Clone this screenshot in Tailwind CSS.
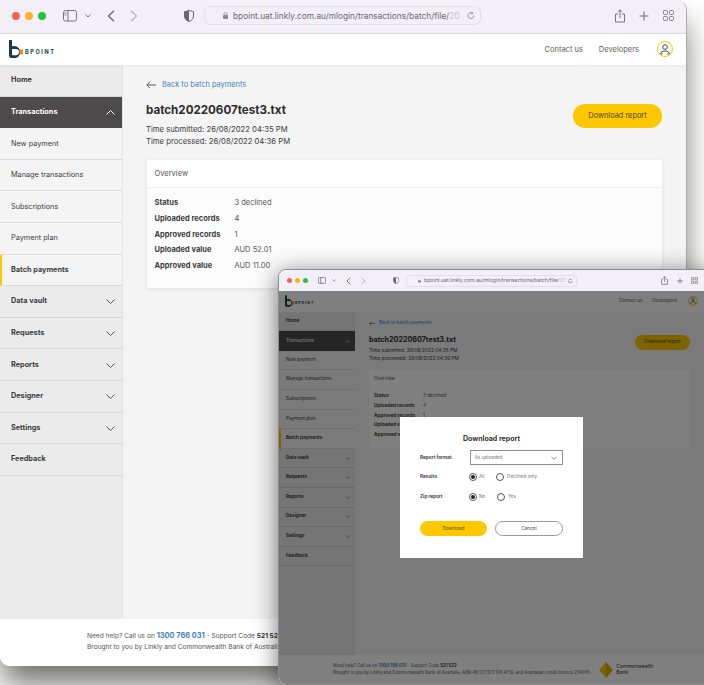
<!DOCTYPE html>
<html lang="en">
<head>
<meta charset="UTF-8">
<title>BPOINT batch payments</title>
<script src="https://cdn.jsdelivr.net/npm/@tailwindcss/browser@4"></script>
</head>
<body class="bg-white">
<div class="relative w-[704px] h-[685px] overflow-hidden font-['Inter',sans-serif] text-[#3c3c3c]">

  <!-- back window -->
  <div class="absolute left-0 top-0 w-[687px] h-[666px] rounded-b-[10px] rounded-tr-[10px] overflow-hidden flex flex-col bg-white shadow-[0_20px_30px_-2px_rgba(40,40,30,0.65)] border-r border-[#a9a9a9]">
    <!-- toolbar -->
    <div class="h-[33.500px] shrink-0 bg-[#f2eff6] border-b border-[#dcdae0] flex items-center pl-[12px] pb-[1px]">
      <div class="flex gap-[5px]">
        <span class="w-[8px] h-[8px] rounded-full bg-[#f25f57]"></span>
        <span class="w-[8px] h-[8px] rounded-full bg-[#fbb32e]"></span>
        <span class="w-[8px] h-[8px] rounded-full bg-[#28c23f]"></span>
      </div>
      <svg class="ml-[17px]" width="14" height="12" viewBox="0 0 14 12" fill="none" stroke="#77757c" stroke-width="1"><rect x="0.5" y="0.5" width="13" height="10.500" rx="2"/><path d="M5 .5v10.500"/><path d="M1.500 3h2M1.500 5h2"/></svg>
      <svg class="ml-[8px]" width="6" height="4" viewBox="0 0 6 4" fill="none" stroke="#77757c"><path d="M.5.500l2.500 2.500L5.500.500"/></svg>
      <svg class="ml-[16px]" width="8" height="12" viewBox="0 0 8 12" fill="none" stroke="#6b696f" stroke-width="1.300"><path d="M7 .7L1.500 6 7 11.300"/></svg>
      <svg class="ml-[15px]" width="8" height="12" viewBox="0 0 8 12" fill="none" stroke="#b5b3b9" stroke-width="1.300"><path d="M1 .7L6.500 6 1 11.300"/></svg>
      <svg class="ml-[46px]" width="10" height="12" viewBox="0 0 10 12"><path d="M5 .5L9.500 1.800V6c0 2.800-2 4.600-4.500 5.500C2.500 10.600.5 8.800.5 6V1.800z" fill="none" stroke="#68666c"/><path d="M5 .5L.5 1.800V6c0 2.800 2 4.600 4.500 5.500z" fill="#68666c"/></svg>
      <div class="ml-[10px] w-[277px] h-[19px] rounded-[6px] border border-[#e2e0e7] flex items-center pl-[18px] gap-[5px] text-[8.300px] text-[#6c6a70] relative">
        <svg width="5" height="7" viewBox="0 0 5 7"><rect y="3" width="5" height="4" rx="1" fill="#8a888e"/><path d="M1 3V2a1.500 1.500 0 013 0v1" fill="none" stroke="#8a888e" stroke-width=".8"/></svg>
        <span class="whitespace-nowrap">bpoint.uat.linkly.com.au/mlogin/transactions/batch/file/<span class="text-[#c4c2c8]">20</span></span>
        <svg class="absolute right-[5px] top-[4px]" width="8" height="9" viewBox="0 0 8 9" fill="none" stroke="#85838a" stroke-width=".9"><path d="M6.800 4.500a2.900 2.900 0 11-1.100-2.200M4.500 .8l1.300 1.500L4.200 3.400"/></svg>
      </div>
      <svg class="ml-[134px]" width="10" height="14" viewBox="0 0 10 14" fill="none" stroke="#77757c" stroke-width="1"><path d="M3 5H.5v8h9V5H7M5 9V1M3 2.800L5 .8l2 2"/></svg>
      <svg class="ml-[14px]" width="10" height="10" viewBox="0 0 10 10" fill="none" stroke="#77757c" stroke-width="1.100"><path d="M5 .5v9M.5 5h9"/></svg>
      <svg class="ml-[14px]" width="11" height="11" viewBox="0 0 11 11" fill="none" stroke="#77757c" stroke-width=".9"><rect x=".5" y=".5" width="4" height="4" rx="1"/><rect x="6.500" y=".5" width="4" height="4" rx="1"/><rect x=".5" y="6.500" width="4" height="4" rx="1"/><rect x="6.500" y="6.500" width="4" height="4" rx="1"/></svg>
    </div>
    <!-- header -->
    <div class="h-[31.500px] shrink-0 bg-white flex items-center justify-between pl-[9px] pr-[13px] shadow-[0_1px_4px_rgba(0,0,0,0.06)] z-10">
      <div class="flex items-center">
        <svg width="14" height="18" viewBox="0 0 14 18"><path d="M0 0h3v6.300A6 6 0 117 18H2.500A2.500 2.500 0 010 15.500zM3 9v5.500a.7.7 0 00.7.7H7a3.100 3.100 0 000-6.200z" fill="#1c3a4c"/><path d="M10.500 9.500h3.500v4l-1.500 1.500-2-2.500z" fill="#f58a1f"/></svg>
        <span class="ml-[2px] mt-[6px] text-[5.500px] font-bold tracking-[1.600px] leading-none text-[#1c3a4c]">BPOINT</span>
      </div>
      <div class="flex items-center text-[7.500px] text-[#5c5c5c]">
        <span>Contact us</span>
        <span class="ml-[16px]">Developers</span>
        <span class="ml-[18px] w-[16px] h-[16px] rounded-full border border-[#fcc800] overflow-hidden flex items-center justify-center">
          <svg width="12" height="13" viewBox="0 0 12 13" fill="none" stroke="#444" stroke-width="1"><circle cx="6" cy="4" r="2.300"/><path d="M1.500 11c0-4 9-4 9 0M2 11h1.500M8.500 11H10"/></svg>
        </span>
      </div>
    </div>
    <div class="flex-1 flex min-h-0">
      <!-- sidebar -->
      <div class="w-[123px] shrink-0 bg-[#ebebeb] border-r border-[#e3e3e3] text-[7.300px]">
        <div class="h-[31.600px] pt-[1px] border-b border-[#d5d5d5] flex items-center pl-[11px] font-bold">Home</div>
        <div class="h-[31.600px] pt-[1px] bg-[#4c4a4a] text-white flex items-center justify-between pl-[11px] pr-[7px] font-bold">Transactions
          <svg width="9" height="5" viewBox="0 0 9 5" fill="none" stroke="#fff"><path d="M.5 4.500l4-4 4 4"/></svg></div>
        <div class="h-[31.600px] pt-[1px] bg-[#f4f4f4] border-b border-[#dcdcdc] flex items-center pl-[11px]">New payment</div>
        <div class="h-[31.600px] pt-[1px] bg-[#f4f4f4] border-b border-[#dcdcdc] flex items-center pl-[11px]">Manage transactions</div>
        <div class="h-[31.600px] pt-[1px] bg-[#f4f4f4] border-b border-[#dcdcdc] flex items-center pl-[11px]">Subscriptions</div>
        <div class="h-[31.600px] pt-[1px] bg-[#f4f4f4] border-b border-[#dcdcdc] flex items-center pl-[11px]">Payment plan</div>
        <div class="h-[31.600px] pt-[1px] bg-[#f4f4f4] border-b border-[#dcdcdc] border-l-2 border-l-[#fcc800] flex items-center pl-[9px] font-bold">Batch payments</div>
        <div class="h-[31.600px] pt-[1px] border-b border-[#d5d5d5] flex items-center justify-between pl-[11px] pr-[7px] font-bold">Data vault
          <svg width="9" height="5" viewBox="0 0 9 5" fill="none" stroke="#555"><path d="M.5.500l4 4 4-4"/></svg></div>
        <div class="h-[31.600px] pt-[1px] border-b border-[#d5d5d5] flex items-center justify-between pl-[11px] pr-[7px] font-bold">Requests
          <svg width="9" height="5" viewBox="0 0 9 5" fill="none" stroke="#555"><path d="M.5.500l4 4 4-4"/></svg></div>
        <div class="h-[31.600px] pt-[1px] border-b border-[#d5d5d5] flex items-center justify-between pl-[11px] pr-[7px] font-bold">Reports
          <svg width="9" height="5" viewBox="0 0 9 5" fill="none" stroke="#555"><path d="M.5.500l4 4 4-4"/></svg></div>
        <div class="h-[31.600px] pt-[1px] border-b border-[#d5d5d5] flex items-center justify-between pl-[11px] pr-[7px] font-bold">Designer
          <svg width="9" height="5" viewBox="0 0 9 5" fill="none" stroke="#555"><path d="M.5.500l4 4 4-4"/></svg></div>
        <div class="h-[31.600px] pt-[1px] border-b border-[#d5d5d5] flex items-center justify-between pl-[11px] pr-[7px] font-bold">Settings
          <svg width="9" height="5" viewBox="0 0 9 5" fill="none" stroke="#555"><path d="M.5.500l4 4 4-4"/></svg></div>
        <div class="h-[31.600px] pt-[1px] border-b border-[#d5d5d5] flex items-center pl-[11px] font-bold">Feedback</div>
      </div>
      <!-- content -->
      <div class="flex-1 bg-[#f4f4f4] pl-[23px] pr-[24px] pt-[14px]">
        <div class="flex items-center gap-[5px] text-[7.400px] text-[#3f82bd] h-[12px]">
          <svg width="10" height="8" viewBox="0 0 10 8" fill="none" stroke="#444" stroke-width=".9"><path d="M10 4H1M4 .8L.8 4 4 7.200"/></svg>
          <span class="ml-[1px]">Back to batch payments</span>
        </div>
        <div class="flex justify-between mt-[10.500px]">
          <div>
            <div class="text-[11.600px] font-bold leading-[17px] text-[#2c2c2c]">batch20220607test3.txt</div>
            <div class="mt-[5.500px] text-[7.700px] leading-[12px] text-[#3c3c3c]">Time submitted: 26/08/2022 04:35 PM</div>
            <div class="text-[7.700px] leading-[12px] text-[#3c3c3c]">Time processed: 26/08/2022 04:36 PM</div>
          </div>
          <div class="w-[89px] h-[24px] mt-[2.500px] rounded-full bg-[#fdc800] flex items-center justify-center text-[7.400px] text-[#4f4420]">Download report</div>
        </div>
        <div class="mt-[12px] ml-[1px] bg-white shadow-[0_1px_5px_rgba(0,0,0,0.08)]">
          <div class="h-[28px] border-b border-[#f0f0f0] flex items-center pl-[7.500px] text-[7.500px] text-[#555]">Overview</div>
          <div class="grid grid-cols-[80px_1fr] px-[7.500px] pt-[7px] pb-[14px] text-[7.500px] leading-[15.800px] bg-[#fcfcfc]">
            <span class="font-bold">Status</span><span class="text-[#555]">3 declined</span>
            <span class="font-bold">Uploaded records</span><span class="text-[#555]">4</span>
            <span class="font-bold">Approved records</span><span class="text-[#555]">1</span>
            <span class="font-bold">Uploaded value</span><span class="text-[#555]">AUD 52.01</span>
            <span class="font-bold">Approved value</span><span class="text-[#555]">AUD 11.00</span>
          </div>
        </div>
      </div>
    </div>
    <!-- footer -->
    <div class="h-[47px] shrink-0 bg-white pl-[87px] pt-[12px] text-[6.600px] leading-[10.500px] text-[#555] whitespace-nowrap">
      <div>Need help? Call us on <span class="font-bold text-[#3f82bd] text-[7.400px]">1300 766 031</span> - Support Code <span class="font-bold text-[#333]">521 522</span></div>
      <div>Brought to you by Linkly and Commonwealth Bank of Australia</div>
    </div>
  </div>

  <!-- front window -->
  <div class="absolute left-[278px] top-[269px] w-[434px] h-[416px] rounded-[8px] overflow-hidden flex flex-col bg-white border border-[#8c8c8c] shadow-[0_4px_24px_rgba(0,0,0,0.55)]">
    <div class="h-[21px] shrink-0 bg-[#f2eff6] flex items-center pl-[8px]">
      <div class="flex gap-[3px]">
        <span class="w-[5px] h-[5px] rounded-full bg-[#f25f57]"></span>
        <span class="w-[5px] h-[5px] rounded-full bg-[#fbb32e]"></span>
        <span class="w-[5px] h-[5px] rounded-full bg-[#28c23f]"></span>
      </div>
      <svg class="ml-[10px]" width="8" height="7" viewBox="0 0 14 12" fill="none" stroke="#77757c" stroke-width="1.500"><rect x="0.500" y="0.500" width="13" height="10.500" rx="2"/><path d="M5 .5v10.500"/></svg>
      <svg class="ml-[6px]" width="4" height="3" viewBox="0 0 6 4" fill="none" stroke="#77757c"><path d="M.5.500l2.500 2.500L5.500.500"/></svg>
      <svg class="ml-[10px]" width="5" height="8" viewBox="0 0 8 12" fill="none" stroke="#6b696f" stroke-width="1.500"><path d="M7 .7L1.500 6 7 11.300"/></svg>
      <svg class="ml-[10px]" width="5" height="8" viewBox="0 0 8 12" fill="none" stroke="#b5b3b9" stroke-width="1.500"><path d="M1 .7L6.500 6 1 11.300"/></svg>
      <svg class="ml-[27px]" width="6" height="7" viewBox="0 0 10 12"><path d="M5 .5L9.500 1.800V6c0 2.800-2 4.600-4.500 5.500C2.500 10.600.5 8.800.5 6V1.800z" fill="none" stroke="#68666c"/><path d="M5 .5L.5 1.800V6c0 2.800 2 4.600 4.500 5.500z" fill="#68666c"/></svg>
      <div class="ml-[7px] w-[171px] h-[12px] rounded-[3px] border border-[#e2e0e7] flex items-center pl-[11px] gap-[3px] text-[5.200px] text-[#6c6a70] relative">
        <svg width="3" height="5" viewBox="0 0 5 7"><rect y="3" width="5" height="4" rx="1" fill="#8a888e"/></svg>
        <span class="whitespace-nowrap">bpoint.uat.linkly.com.au/mlogin/transactions/batch/file/<span class="text-[#c4c2c8]">20</span></span>
        <svg class="absolute right-[3px] top-[2.500px]" width="5" height="6" viewBox="0 0 8 9" fill="none" stroke="#85838a" stroke-width="1.200"><path d="M6.800 4.500a2.900 2.900 0 11-1.100-2.200"/></svg>
      </div>
      <svg class="ml-[84px]" width="7" height="9" viewBox="0 0 10 14" fill="none" stroke="#77757c" stroke-width="1.200"><path d="M3 5H.5v8h9V5H7M5 9V1M3 2.800L5 .8l2 2"/></svg>
      <svg class="ml-[9px]" width="6" height="6" viewBox="0 0 10 10" fill="none" stroke="#77757c" stroke-width="1.500"><path d="M5 .5v9M.5 5h9"/></svg>
      <svg class="ml-[8px]" width="7" height="7" viewBox="0 0 11 11" fill="none" stroke="#77757c" stroke-width="1.200"><rect x=".5" y=".5" width="4" height="4" rx="1"/><rect x="6.500" y=".5" width="4" height="4" rx="1"/><rect x=".5" y="6.500" width="4" height="4" rx="1"/><rect x="6.500" y="6.500" width="4" height="4" rx="1"/></svg>
    </div>
    <div class="relative flex-1 flex flex-col min-h-0">
      <div class="h-[20.700px] shrink-0 bg-white flex items-center justify-between pl-[6px] pr-[13px]">
        <div class="flex items-center">
          <svg width="9" height="12" viewBox="0 0 14 18"><path d="M0 0h3v6.300A6 6 0 117 18H2.500A2.500 2.500 0 010 15.500zM3 9v5.500a.7.7 0 00.7.7H7a3.100 3.100 0 000-6.200z" fill="#1c3a4c"/><path d="M10.500 9.500h3.500v4l-1.500 1.500-2-2.500z" fill="#f58a1f"/></svg>
          <span class="ml-[1px] mt-[4px] text-[3.500px] font-bold tracking-[1px] leading-none text-[#1c3a4c]">BPOINT</span>
        </div>
        <div class="flex items-center text-[4.600px] text-[#5c5c5c]">
          <span>Contact us</span>
          <span class="ml-[10px]">Developers</span>
          <span class="ml-[11px] w-[10px] h-[10px] rounded-full border border-[#fcc800] flex items-center justify-center">
            <svg width="8" height="8" viewBox="0 0 12 13" fill="none" stroke="#444" stroke-width="1.200"><circle cx="6" cy="4" r="2.300"/><path d="M1.500 11c0-4 9-4 9 0"/></svg>
          </span>
        </div>
      </div>
      <div class="flex-1 flex min-h-0">
        <div class="w-[76px] shrink-0 bg-[#ebebeb] text-[4.600px]">
          <div class="h-[19.600px] border-b border-[#d5d5d5] flex items-center pl-[7px] font-bold">Home</div>
          <div class="h-[19.600px] bg-[#4c4a4a] text-white flex items-center justify-between pl-[7px] pr-[5px]">Transactions
            <svg width="5" height="3" viewBox="0 0 9 5" fill="none" stroke="#fff"><path d="M.5 4.500l4-4 4 4"/></svg></div>
          <div class="h-[19.600px] bg-[#f4f4f4] border-b border-[#dcdcdc] flex items-center pl-[7px]">New payment</div>
          <div class="h-[19.600px] bg-[#f4f4f4] border-b border-[#dcdcdc] flex items-center pl-[7px]">Manage transactions</div>
          <div class="h-[19.600px] bg-[#f4f4f4] border-b border-[#dcdcdc] flex items-center pl-[7px]">Subscriptions</div>
          <div class="h-[19.600px] bg-[#f4f4f4] border-b border-[#dcdcdc] flex items-center pl-[7px]">Payment plan</div>
          <div class="h-[19.600px] bg-[#f4f4f4] border-b border-[#dcdcdc] border-l-2 border-l-[#fcc800] flex items-center pl-[5px] font-bold">Batch payments</div>
          <div class="h-[19.600px] border-b border-[#d5d5d5] flex items-center justify-between pl-[7px] pr-[5px] font-bold">Data vault
            <svg width="5" height="3" viewBox="0 0 9 5" fill="none" stroke="#555"><path d="M.5.500l4 4 4-4"/></svg></div>
          <div class="h-[19.600px] border-b border-[#d5d5d5] flex items-center justify-between pl-[7px] pr-[5px] font-bold">Requests
            <svg width="5" height="3" viewBox="0 0 9 5" fill="none" stroke="#555"><path d="M.5.500l4 4 4-4"/></svg></div>
          <div class="h-[19.600px] border-b border-[#d5d5d5] flex items-center justify-between pl-[7px] pr-[5px] font-bold">Reports
            <svg width="5" height="3" viewBox="0 0 9 5" fill="none" stroke="#555"><path d="M.5.500l4 4 4-4"/></svg></div>
          <div class="h-[19.600px] border-b border-[#d5d5d5] flex items-center justify-between pl-[7px] pr-[5px] font-bold">Designer
            <svg width="5" height="3" viewBox="0 0 9 5" fill="none" stroke="#555"><path d="M.5.500l4 4 4-4"/></svg></div>
          <div class="h-[19.600px] border-b border-[#d5d5d5] flex items-center justify-between pl-[7px] pr-[5px] font-bold">Settings
            <svg width="5" height="3" viewBox="0 0 9 5" fill="none" stroke="#555"><path d="M.5.500l4 4 4-4"/></svg></div>
          <div class="h-[19.600px] border-b border-[#d5d5d5] flex items-center pl-[7px] font-bold">Feedback</div>
        </div>
        <div class="flex-1 bg-[#f4f4f4] pl-[14px] pr-[21px] pt-[8px]">
          <div class="flex items-center gap-[3px] text-[4.600px] text-[#3f82bd] h-[8px]">
            <svg width="6" height="5" viewBox="0 0 10 8" fill="none" stroke="#444"><path d="M10 4H1M4 .8L.8 4 4 7.200"/></svg>
            <span class="ml-[1px]">Back to batch payments</span>
          </div>
          <div class="flex justify-between mt-[6px]">
            <div>
              <div class="text-[7.200px] font-bold leading-[11px] text-[#2c2c2c]">batch20220607test3.txt</div>
              <div class="mt-[2.500px] text-[4.800px] leading-[7.500px]">Time submitted: 26/08/2022 04:35 PM</div>
              <div class="text-[4.800px] leading-[7.500px]">Time processed: 26/08/2022 04:36 PM</div>
            </div>
            <div class="w-[55px] h-[15px] mt-[1.500px] rounded-full bg-[#fdc800] flex items-center justify-center text-[4.600px] text-[#4f4420]">Download report</div>
          </div>
          <div class="mt-[8px] bg-white h-[78px]">
            <div class="h-[16px] flex items-center pl-[5px] text-[4.700px] text-[#555]">Overview</div>
            <div class="grid grid-cols-[49px_1fr] px-[5px] pt-[5px] text-[4.700px] leading-[9.700px]">
              <span class="font-bold">Status</span><span class="text-[#555]">3 declined</span>
              <span class="font-bold">Uploaded records</span><span class="text-[#555]">4</span>
              <span class="font-bold">Approved records</span><span class="text-[#555]">1</span>
              <span class="font-bold">Uploaded value</span><span class="text-[#555]">AUD 52.01</span>
              <span class="font-bold">Approved value</span><span class="text-[#555]">AUD 11.00</span>
            </div>
          </div>
        </div>
      </div>
      <div class="h-[29px] shrink-0 bg-white flex items-center pl-[54px] text-[4.300px] leading-[6.500px] text-[#555] whitespace-nowrap">
        <div>
          <div>Need help? Call us on <span class="font-bold text-[#3f82bd]">1300 766 031</span> - Support Code <span class="font-bold text-[#333]">521 522</span></div>
          <div>Brought to you by Linkly and Commonwealth Bank of Australia, ABN 48 123 123 124 AFSL and Australian credit licence 234945</div>
        </div>
        <svg class="ml-[9px]" width="14" height="16" viewBox="0 0 14 16"><path d="M7 0l7 8-7 8-7-8z" fill="#fdc800"/><path d="M7 0l7 8-7 8z" fill="#222" opacity=".15"/></svg>
        <div class="ml-[3px] text-[5px] leading-[5.500px] text-[#333]">Commonwealth<br>Bank</div>
      </div>
      <!-- dim layer over the page -->
      <div class="absolute inset-0 bg-black/50"></div>
      <!-- dialog -->
      <div class="absolute left-[121px] top-[126px] w-[183px] h-[141px] bg-white px-[20px] pt-[17px] text-[4.700px] text-[#444]">
        <div class="text-center text-[7px] font-bold leading-[10px] text-[#333]">Download report</div>
        <div class="flex items-center mt-[6px] h-[15px]">
          <span class="w-[50px] font-bold">Report format</span>
          <div class="w-[94px] h-[15px] border border-[#8e8e8e] flex items-center justify-between pl-[4px] pr-[5px] text-[#777]">As uploaded
            <svg width="6" height="4" viewBox="0 0 9 5" fill="none" stroke="#555"><path d="M.5.500l4 4 4-4"/></svg>
          </div>
        </div>
        <div class="flex items-center mt-[4.500px] h-[15px]">
          <span class="w-[49px] font-bold">Results</span>
          <span class="w-[8px] h-[8px] rounded-full border border-[#555] flex items-center justify-center"><span class="w-[4px] h-[4px] rounded-full bg-[#222]"></span></span>
          <span class="ml-[2px] w-[17px] text-[#777]">All</span>
          <span class="w-[8px] h-[8px] rounded-full border border-[#555]"></span>
          <span class="ml-[3px] text-[#777]">Declined only</span>
        </div>
        <div class="flex items-center mt-[5px] h-[15px]">
          <span class="w-[49px] font-bold">Zip report</span>
          <span class="w-[8px] h-[8px] rounded-full border border-[#555] flex items-center justify-center"><span class="w-[4px] h-[4px] rounded-full bg-[#222]"></span></span>
          <span class="ml-[2px] w-[18px] text-[#777]">No</span>
          <span class="w-[8px] h-[8px] rounded-full border border-[#555]"></span>
          <span class="ml-[3px] text-[#777]">Yes</span>
        </div>
        <div class="flex justify-between mt-[16.500px]">
          <div class="w-[67px] h-[15px] rounded-full bg-[#fdc800] flex items-center justify-center text-[#5a4d1c]">Download</div>
          <div class="w-[68px] h-[15px] rounded-full border border-[#999] flex items-center justify-center">Cancel</div>
        </div>
      </div>
    </div>
  </div>
</div>
</body>
</html>
